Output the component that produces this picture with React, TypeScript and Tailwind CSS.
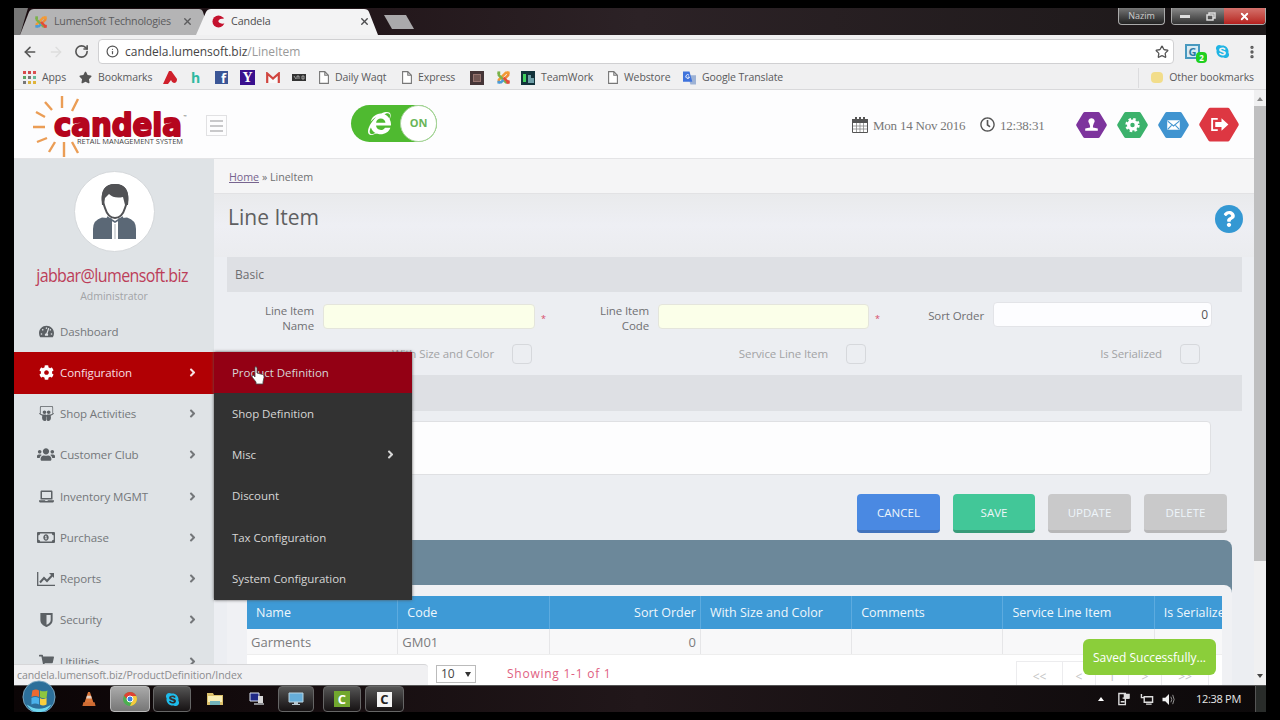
import type { ReactNode } from 'react';
import {
  FaAngleRight,
  FaCog,
  FaLaptop,
  FaQuestion,
  FaRegClock,
  FaRegMoneyBillAlt,
  FaShoppingCart,
  FaSkype,
  FaSlideshare,
  FaStar,
  FaTachometerAlt,
  FaUsers,
  FaInternetExplorer,
} from 'react-icons/fa';
import { ArrowLeft, ArrowRight, Info, MoreVertical, RotateCw, Star, X } from 'lucide-react';

const menuItems = [
  { label: 'Dashboard', icon: <FaTachometerAlt />, arrow: false },
  { label: 'Configuration', icon: <FaCog />, arrow: true, active: true },
  { label: 'Shop Activities', icon: <FaSlideshare />, arrow: true },
  { label: 'Customer Club', icon: <FaUsers className="h-[17px] w-[18px]" />, arrow: true },
  { label: 'Inventory MGMT', icon: <FaLaptop />, arrow: true },
  { label: 'Purchase', icon: <FaRegMoneyBillAlt className="h-[17px] w-[18px]" />, arrow: true },
  { label: 'Reports', icon: <ChartIcon />, arrow: true },
  { label: 'Security', icon: <ShieldIcon />, arrow: true },
  { label: 'Utilities', icon: <FaShoppingCart />, arrow: true },
];

const subMenu = ['Product Definition', 'Shop Definition', 'Misc', 'Discount', 'Tax Configuration', 'System Configuration'];

const columns = ['Name', 'Code', 'Sort Order', 'With Size and Color', 'Comments', 'Service Line Item', 'Is Serialized'];
const row = ['Garments', 'GM01', '0', '', '', '', ''];

function ShieldIcon() {
  return (
    <svg viewBox="0 0 14 16" className="h-[14px] w-[13px]" fill="currentColor">
      <path d="M0 0h14v8c0 4-3 6.500-7 8-4-1.500-7-4-7-8zM7 2.200v11.300c2.800-1.200 4.800-2.900 4.800-5.500V2.200z" fillRule="evenodd" />
    </svg>
  );
}

function ChartIcon() {
  return (
    <svg viewBox="0 0 18 14" className="h-[14px] w-[18px]" fill="none" stroke="currentColor">
      <path d="M.7 0v13.300H18" strokeWidth="1.300" />
      <path d="m3 10.500 4-4.500 3 3 5.500-6" strokeWidth="2" />
      <path d="M12 1h5v5z" fill="currentColor" stroke="none" />
    </svg>
  );
}

function CalendarIcon() {
  return (
    <svg viewBox="0 0 16 16" className="mr-[5px] h-[16px] w-[16px]">
      <path d="M.5 2.500h15v13H.5z" fill="#fff" stroke="#555" />
      <path d="M0 2h16v4H0z" fill="#555" />
      <path d="M4 0v4M8 0v4M12 0v4" stroke="#555" strokeWidth="2" />
      <path d="M1 9h14M1 12h14M4.500 6v9M8 6v9M11.500 6v9" stroke="#888" strokeWidth=".8" />
    </svg>
  );
}

function PageIcon() {
  return (
    <svg viewBox="0 0 10 13" className="h-[13px] w-[10px]" fill="#fff" stroke="#777" strokeWidth="1.100">
      <path d="M.6.6h5.200l3.600 3.700v8.100H.6zM5.800.6v3.700h3.600" />
    </svg>
  );
}

function JoomlaColors({ className }: { className: string }) {
  return (
    <svg viewBox="0 0 16 16" className={className} fill="none" strokeWidth="2.600">
      <path d="M3 13V10.500L10.500 3H13" stroke="#f29a36" />
      <path d="M13 13h-2.500L3 5.500V3" stroke="#7ab24a" />
      <path d="M13 3v2.500L8 10.500" stroke="#f08a36" />
      <path d="m8 8 5 5M13 11v2h-2" stroke="#e24b3b" />
      <path d="M3 13h2.500L8 10.500" stroke="#4b9bd8" />
      <path d="M1.500 1.500h3v3h-3z" fill="#7ab24a" />
      <path d="M11.500 1.500h3v3h-3z" fill="#f29a36" />
      <path d="M11.500 11.500h3v3h-3z" fill="#e24b3b" />
      <path d="M1.500 11.500h3v3h-3z" fill="#4b9bd8" />
    </svg>
  );
}

function BrowserTabs() {
  return (
    <div className="relative flex h-[27px] shrink-0 bg-gradient-to-r from-[#17090d] via-[#2c2226] to-[#1c1819]">
      <svg className="absolute inset-0 h-[27px] w-[420px]" viewBox="0 0 420 27">
        <path d="M0 0h14L6 27H0z" fill="#777" />
        <path d="M6 27 15 4q1.500-3 5-3h165q3 0 4 3l7 23z" fill="#b4b4b5" />
        <path d="M182 27 192 4q1.500-3 5-3h153q4 0 5 3l9 23z" fill="#f3f3f4" />
        <path d="M370 7h22l8 14h-22z" fill="#aaa9ab" />
      </svg>
      <div className="relative flex w-[185px] items-center pl-5 pr-1.5 text-[10.700px] tracking-[-0.250px] text-[#5b5b5d]">
        <JoomlaColors className="h-[14px] w-[14px] shrink-0" />
        <span className="ml-1.5 whitespace-nowrap">LumenSoft Technologies</span>
        <X className="ml-auto h-[11px] w-[11px]" strokeWidth={3} />
      </div>
      <div className="relative flex w-[175px] items-center pl-[13px] text-[10.700px] tracking-[-0.100px] text-[#4c4c4e]">
        <svg viewBox="0 0 14 14" className="h-[13px] w-[13px]">
          <circle cx="7" cy="7" r="6.500" fill="#c4122e" />
          <path d="M14 4.500C9 3 6.500 5 7 7s4 3 7 2z" fill="#f3f3f4" />
        </svg>
        <span className="ml-[6px]">Candela</span>
        <X className="ml-auto mr-1 h-[11px] w-[11px]" strokeWidth={3} />
      </div>
      <div className="absolute right-0 top-0 flex h-[17px] gap-1.5 text-white">
        <div className="w-[47px] rounded-b border border-t-0 border-[#aaa] bg-gradient-to-b from-[#777] to-[#222] text-center text-[9px] leading-[16px] text-[#ccc]">Nazim</div>
        <div className="flex w-[95px] overflow-hidden rounded-b border border-t-0 border-[#aaa]">
          <div className="flex w-[26px] items-center justify-center bg-gradient-to-b from-[#8a8a8a] to-[#333]">
            <span className="h-[3px] w-2.5 bg-[#ddd]" />
          </div>
          <div className="flex w-[26px] items-center justify-center bg-gradient-to-b from-[#8a8a8a] to-[#333]">
            <svg viewBox="0 0 10 9" className="h-[9px] w-[10px]" fill="none" stroke="#ddd" strokeWidth="1.500">
              <path d="M3 3V1h6v5H7M1 3h6v5H1z" />
            </svg>
          </div>
          <div className="flex flex-1 items-center justify-center bg-gradient-to-b from-[#d4716c] to-[#b51d1d]">
            <X className="h-[11px] w-[11px]" strokeWidth={4} />
          </div>
        </div>
      </div>
    </div>
  );
}

function AddressBar() {
  return (
    <div className="flex h-[30px] shrink-0 items-center bg-[#f0f0f1] pl-2 pt-[3px] text-[#555]">
      <ArrowLeft className="h-4 w-4" strokeWidth={2.4} />
      <ArrowRight className="ml-[10px] h-4 w-4 text-[#ddd]" strokeWidth={2} />
      <RotateCw className="ml-[10px] h-[15px] w-[15px]" strokeWidth={2.6} />
      <div className="ml-[9px] flex h-[25px] w-[1076px] items-center rounded-sm border border-[#d0d0d2] bg-white pl-[7px] pr-[4px]">
        <Info className="h-[13px] w-[13px]" strokeWidth={2.2} />
        <span className="ml-[6px] text-[12px] tracking-[-0.020px] text-[#444]">
          candela.lumensoft.biz<span className="text-[#999]">/LineItem</span>
        </span>
        <Star className="ml-auto h-[14px] w-[14px]" strokeWidth={2.2} />
      </div>
      <div className="relative ml-[11px] h-[15px] w-[15px] border-2 border-[#4899bf] bg-[#d8ebf4] text-center text-[11px] font-bold leading-[11px] text-[#2b7aa5]">
        G
        <span className="absolute -bottom-[6px] left-[9px] h-[11px] w-[11px] rounded-sm bg-[#20d020] text-[8px] leading-[11px] text-white">2</span>
      </div>
      <FaSkype className="ml-[15px] h-[15px] w-[15px] text-[#1fb4e4]" />
      <MoreVertical className="ml-[14px] h-[16px] w-[16px]" strokeWidth={3} />
    </div>
  );
}

function Bookmark({ icon, label, className }: { icon: ReactNode; label?: string; className: string }) {
  return (
    <div className={`flex shrink-0 items-center whitespace-nowrap ${className}`}>
      {icon}
      {label && <span className="ml-[6px]">{label}</span>}
    </div>
  );
}

function Bookmarks() {
  return (
    <div className="flex h-[25px] shrink-0 items-center border-b border-[#d9d9db] bg-[#f0f0f1] pl-[9px] pt-px text-[10.500px] tracking-[-0.100px] text-[#5a5a5c]">
      <Bookmark
        className="w-[56px]"
        label="Apps"
        icon={
          <svg viewBox="0 0 13 13" className="h-[13px] w-[13px]">
            {[0, 1, 2].map((i) => (
              <g key={i}>
                <rect x="0" y={i * 5} width="3" height="3" fill={['#d84a4a', '#5aa564', '#777'][i]} />
                <rect x="5" y={i * 5} width="3" height="3" fill={['#c94b50', '#777', '#d9b440'][i]} />
                <rect x="10" y={i * 5} width="3" height="3" fill={['#db5151', '#6b9', '#e0b43a'][i]} />
              </g>
            ))}
          </svg>
        }
      />
      <Bookmark className="w-[84px]" label="Bookmarks" icon={<FaStar className="h-[13px] w-[13px] text-[#555]" />} />
      <Bookmark
        className="w-[28px]"
        icon={
          <svg viewBox="0 0 14 13" className="h-[13px] w-[14px]" fill="#cf202c">
            <path d="M6 0q2-1 3 1l5 7q0 4-3 4-2 0-3-3l-3 4H0z" />
          </svg>
        }
      />
      <Bookmark className="w-[24px]" icon={<span className="text-[14px] font-bold text-[#2fb9a0]">h</span>} />
      <Bookmark
        className="w-[25px]"
        icon={<span className="h-[13px] w-[13px] bg-[#3b5696] pr-0.5 text-right text-[13px] font-bold leading-[15px] text-white">f</span>}
      />
      <Bookmark
        className="w-[26px]"
        icon={<span className="h-[15px] w-[15px] bg-[#3a108e] text-center font-['Liberation_Serif'] text-[14px] font-bold leading-[15px] text-white">Y</span>}
      />
      <Bookmark
        className="w-[26px]"
        icon={
          <svg viewBox="0 0 14 11" className="h-[11px] w-[14px]" fill="#f9f9f9" stroke="#d0453f" strokeWidth="2.200">
            <path d="M1.200 11V1.500L7 6.500l5.800-5V11" />
          </svg>
        }
      />
      <Bookmark
        className="w-[27px]"
        icon={
          <svg viewBox="0 0 14 7" className="h-[7px] w-[14px]">
            <path d="M0 0h14v7H0z" fill="#333" />
            <path d="M2 2l2 3M5 5V2h2v3M10 2v3h2V2z" stroke="#ccc" fill="none" strokeWidth=".7" />
          </svg>
        }
      />
      <Bookmark className="w-[83px]" label="Daily Waqt" icon={<PageIcon />} />
      <Bookmark className="w-[68px]" label="Express" icon={<PageIcon />} />
      <Bookmark
        className="w-[26px]"
        icon={
          <span className="flex h-[14px] w-[14px] items-center justify-center bg-[#453537]">
            <span className="h-[8px] w-[8px] border border-[#97746f] bg-[#715653]" />
          </span>
        }
      />
      <Bookmark className="w-[25px]" icon={<JoomlaColors className="h-[15px] w-[15px]" />} />
      <Bookmark
        className="w-[87px]"
        label="TeamWork"
        icon={
          <svg viewBox="0 0 14 14" className="h-[14px] w-[14px]">
            <path d="M0 0h14v14H0z" fill="#12323a" />
            <path d="M2 3h3v8H2z" fill="#40cf5e" />
            <path d="M7 4h3v3h3v5H7z" fill="#6f9fa8" />
          </svg>
        }
      />
      <Bookmark className="w-[75px]" label="Webstore" icon={<PageIcon />} />
      <Bookmark
        className="w-[120px]"
        label="Google Translate"
        icon={
          <svg viewBox="0 0 14 14" className="h-[14px] w-[13px]">
            <path d="M5 4h9v10H8z" fill="#9db2d5" />
            <path d="M0 0h7l3 11H0z" fill="#3f73dc" />
            <path d="M6.500 4A2 2 0 1 0 7 6H5" stroke="#fff" fill="none" />
          </svg>
        }
      />
      <div className="ml-auto mr-[12px] flex h-[20px] items-center border-l border-[#dcdcde] pl-[12px]">
        <span className="h-[11px] w-[12px] rounded-sm bg-[#f2dd8b]" />
        <span className="ml-[6px]">Other bookmarks</span>
      </div>
    </div>
  );
}

function Logo() {
  return (
    <svg viewBox="0 0 166 66" className="h-[66px] w-[166px]">
      <path
        d="M3 35h12M6 20l9 5M15 10l7 8M32 4v12M48 7l-6 12M7 50l10-4M19 60l6-10M34 65V50M48 61l-6-11"
        stroke="#eb9d55"
        strokeWidth="2.400"
      />
      <text
        x="24"
        y="43.500"
        fontFamily="'DejaVu Sans'"
        fontWeight="700"
        fontSize="32"
        fill="#b5051d"
        stroke="#b5051d"
        strokeWidth="2"
        strokeLinejoin="round"
        textLength="128"
        lengthAdjust="spacingAndGlyphs"
      >
        candela
      </text>
      <text x="47" y="52" fontFamily="Open Sans" fontSize="6.500" fill="#444" textLength="106" lengthAdjust="spacingAndGlyphs">
        RETAIL MANAGEMENT SYSTEM
      </text>
      <text x="153.500" y="26" fontFamily="Open Sans" fontSize="4" fill="#555">
        ™
      </text>
    </svg>
  );
}

function Hexagon({ color, className, children }: { color: string; className: string; children: ReactNode }) {
  return (
    <svg viewBox="0 0 32 28" className={className}>
      <path d="M9 .5h14q1 0 1.600 1l6.900 11.500q.6 1 0 2l-6.900 11.500q-.6 1-1.600 1H9q-1 0-1.600-1L.5 15q-.6-1 0-2L7.400 1.500q.6-1 1.600-1z" fill={color} />
      {children}
    </svg>
  );
}

function Header() {
  return (
    <div className="flex h-[69px] shrink-0 items-start border-b border-[#e4e4e6] bg-[#fdfdfe]">
      <div className="ml-[16px] mt-[2px] w-[162px]">
        <Logo />
      </div>
      <div className="ml-[14px] mt-[25px] flex h-[21px] w-[21px] flex-col justify-center gap-[3px] border border-[#e1e1e3] px-[3px]">
        <span className="h-[2px] bg-[#c9c9cb]" />
        <span className="h-[2px] bg-[#c9c9cb]" />
        <span className="h-[2px] bg-[#c9c9cb]" />
      </div>
      <div className="ml-[124px] mt-[15px] flex h-[37px] w-[86px] items-center rounded-full bg-[#4fba30]">
        <FaInternetExplorer className="ml-[17px] h-[23px] w-[23px] text-white" />
        <span className="ml-auto flex h-[37px] w-[37px] items-center justify-center rounded-full border border-[#a8d39b] bg-white text-[11px] font-bold text-[#69b557]">ON</span>
      </div>
      <div className="ml-auto flex h-[69px] items-center font-['Liberation_Serif'] text-[13px] tracking-[-0.220px] text-[#777]">
        <CalendarIcon />
        <span className="w-[107px] whitespace-nowrap pt-[2px]">Mon 14 Nov 2016</span>
        <FaRegClock className="mr-[5px] h-[15px] w-[15px] text-[#555]" />
        <span className="w-[76px] pt-[2px]">12:38:31</span>
      </div>
      <div className="mr-[15px] flex h-[69px] items-center">
        <Hexagon color="#7d349d" className="h-[28px] w-[31px]">
          <path d="M16 7a3.200 3.200 0 0 1 2.300 5.500L17.500 15v1.500l5 1V20h-13v-2.500l5-1V15l-.8-2.500A3.200 3.200 0 0 1 16 7z" fill="#fff" />
        </Hexagon>
        <Hexagon color="#3cb26c" className="ml-[10px] h-[28px] w-[31px]">
          <circle cx="16" cy="14" r="4" fill="none" stroke="#fff" strokeWidth="3.400" />
          <circle cx="16" cy="14" r="6.200" fill="none" stroke="#fff" strokeWidth="2.400" strokeDasharray="2.600 2.270" />
        </Hexagon>
        <Hexagon color="#4094d0" className="ml-[10px] h-[28px] w-[31px]">
          <rect x="9.500" y="9" width="13" height="10" rx="1" fill="#fff" />
          <path d="m10 10 6 5 6-5M10 18.500l4-4M22 18.500l-4-4" fill="none" stroke="#4094d0" strokeWidth="1.100" />
        </Hexagon>
        <Hexagon color="#dd3742" className="ml-[10px] h-[35px] w-[40px]">
          <path d="M15 9.500h-4.500v9H15" fill="none" stroke="#fff" strokeWidth="1.500" />
          <path d="M13 12h5V9l5.500 5-5.500 5v-3h-5z" fill="#fff" />
        </Hexagon>
      </div>
    </div>
  );
}

function Sidebar() {
  return (
    <div className="w-[200px] shrink-0 overflow-hidden bg-[#dfe3e6]">
      <div className="flex h-[152px] flex-col items-center pt-[12px]">
        <div className="h-[81px] w-[81px] shrink-0 rounded-full border border-[#d5d8db] bg-white">
          <svg viewBox="0 0 79 79" className="h-full w-full">
            <path d="M18 67V57q0-9 9-11.500l10 1V67zM61 67V57q0-9-9-11.500l-9 1V67z" fill="#5b6876" />
            <path d="M28 30q-2-17 12-17 14 0 12 17l-2 6q-3 10-10 10t-10-10z" fill="#fff" stroke="#515255" strokeWidth="2" />
            <path d="M27 33q-3-21 13-21 16 0 13 21h-3l-2-8q-9 2-14-3l-4 4-1 7z" fill="#515255" />
            <path d="m32 45 8 5 8-5" fill="none" stroke="#5b6876" strokeWidth="1.500" />
            <path d="M40 52v15" stroke="#c9ccd0" strokeWidth="1.500" />
          </svg>
        </div>
        <div className="mr-[4px] mt-[10px] scale-y-[1.150] whitespace-nowrap text-[16px] leading-[26px] tracking-[-0.600px] text-[#bc3e59]">jabbar@lumensoft.biz</div>
        <div className="text-[10.500px] leading-[16px] text-[#a2a4a6]">Administrator</div>
      </div>
      {menuItems.map((item) => (
        <div
          key={item.label}
          className={`flex h-[41.250px] items-center pb-px pl-[23px] pr-[15px] text-[11.500px] tracking-[-0.100px] ${
            item.active ? 'bg-[#b10004] text-[#f7dfe1]' : 'text-[#74777a]'
          }`}
        >
          <span className={`flex w-[18px] justify-center text-[15px] ${item.active ? 'text-white' : 'text-[#5c6165]'}`}>{item.icon}</span>
          <span className="ml-[5px] whitespace-nowrap">{item.label}</span>
          {item.arrow && <FaAngleRight className="ml-auto h-[13px] w-[13px]" />}
        </div>
      ))}
    </div>
  );
}

function SubMenu() {
  return (
    <div className="absolute left-[200px] top-[262px] h-[248px] w-[198px] bg-[#323232] text-[11.500px] tracking-[-0.050px] text-[#d6d6d6] shadow-[0_0_3px_#555]">
      {subMenu.map((label, i) => (
        <div key={label} className={`flex h-[41.250px] items-center pb-px pl-[18px] pr-[15px] ${i === 0 ? 'bg-[#930014]' : ''}`}>
          {label}
          {label === 'Misc' && <FaAngleRight className="ml-auto h-[13px] w-[13px]" />}
        </div>
      ))}
      <svg viewBox="0 0 14 19" className="absolute left-[37px] top-[14px] h-[19px] w-[14px]" fill="#fff" stroke="#444" strokeWidth=".8">
        <path d="M4 1q1.500-1 2 1v5l5.500 1.500q2 .5 1.500 3L12 16v2H5v-2l-4-5q-.5-2 1.500-1.500L4 11z" />
      </svg>
    </div>
  );
}

function CheckField({ label, className }: { label: string; className: string }) {
  return (
    <div className={`flex items-center justify-end ${className}`}>
      {label}
      <span className="ml-[18px] h-[20px] w-[20px] rounded-sm border border-[#d6d8dc]" />
    </div>
  );
}

function LineItemForm() {
  return (
    <div>
      <div className="ml-[13px] flex h-[35px] w-[1015px] items-center bg-[#dee0e4] pl-[8px] text-[12px] text-[#6e6e70]">Basic</div>
      <div className="flex h-[46px] items-start pt-[11px] text-[11.500px] tracking-[-0.100px] text-[#707072]">
        <span className="w-[100px] text-right leading-[15px]">
          Line Item
          <br />
          Name
        </span>
        <span className="ml-[9px] mt-px h-[25px] w-[212px] rounded-sm border border-[#e4e5dc] bg-[#fbffe9]" />
        <span className="ml-[6px] mt-[8px] w-[6px] text-[9px] leading-[15px] text-[#d74b68]">*</span>
        <span className="w-[102px] text-right leading-[15px]">
          Line Item
          <br />
          Code
        </span>
        <span className="ml-[9px] mt-px h-[25px] w-[211px] rounded-sm border border-[#e4e5dc] bg-[#fbffe9]" />
        <span className="ml-[6px] mt-[8px] w-[6px] text-[9px] leading-[15px] text-[#d74b68]">*</span>
        <span className="mt-[5px] w-[103px] text-right leading-[16px]">Sort Order</span>
        <span className="ml-[9px] -mt-px h-[25px] w-[219px] rounded-sm border border-[#e3e4e8] bg-[#fdfdff] pr-[3px] text-right text-[12px] leading-[24px] text-[#555]">0</span>
      </div>
      <div className="flex h-[37px] items-center pb-[5px] text-[11.500px] tracking-[-0.100px] text-[#a2a3a5]">
        <CheckField label="With Size and Color" className="w-[318px]" />
        <CheckField label="Service Line Item" className="w-[334px]" />
        <CheckField label="Is Serialized" className="w-[334px]" />
      </div>
      <div className="ml-[13px] h-[36px] w-[1015px] bg-[#dee0e4]" />
      <div className="ml-[110px] mt-[10px] h-[54px] w-[887px] rounded border border-[#dfe0e3] bg-[#fdfdfe]" />
      <div className="ml-[643px] mt-[19px] flex h-[39px] gap-[13px] text-center text-[11.500px] leading-[37px] text-[#eef5fa]">
        <button className="w-[83px] rounded border-b-[3px] border-[#4273bd] bg-[#4a89e2]">CANCEL</button>
        <button className="w-[82px] rounded border-b-[3px] border-[#379b79] bg-[#42c798]">SAVE</button>
        <button className="w-[83px] rounded border-b-[3px] border-[#b7b7b8] bg-[#c9c9ca]">UPDATE</button>
        <button className="w-[83px] rounded border-b-[3px] border-[#b7b7b8] bg-[#c9c9ca]">DELETE</button>
      </div>
    </div>
  );
}

function ItemsTable() {
  return (
    <div className="ml-[13px] mt-[7px] w-[1005px] rounded-t-[8px] bg-[#6c889a] pt-[45px]">
      <div className="h-[99px] rounded-t-[8px] bg-[#f0f1f4] pl-[20px] pt-[11px]">
        <div className="w-[975px] overflow-hidden bg-white">
          <div className="flex h-[33px] w-[1060px] bg-[#3e9ad6] text-[12.500px] leading-[33px] text-[#eef7fc]">
            {columns.map((name) => (
              <div key={name} className={`w-[151.300px] shrink-0 whitespace-nowrap border-r border-[#5dabdf] ${name === 'Sort Order' ? 'pr-[4px] text-right' : 'pl-[9px]'}`}>
                {name}
              </div>
            ))}
          </div>
          <div className="flex h-[26px] w-[1060px] border-b border-[#eee] bg-[#f8f8f9] text-[13px] leading-[26px] text-[#7c7c7e]">
            {row.map((value, i) => (
              <div key={columns[i]} className={`w-[151.300px] shrink-0 border-r border-[#e6e6e8] ${i === 2 ? 'pr-[4px] text-right' : 'pl-[4px]'}`}>
                {value}
              </div>
            ))}
          </div>
          <div className="flex h-[30px] items-start pl-[189px] text-[12px]">
            <div className="mt-[10px] flex h-[18px] w-[40px] items-center justify-between border border-[#bbb] px-[4px] text-[12px] text-[#444]">
              10 <span className="border-x-[3px] border-t-[5px] border-x-transparent border-t-[#333]" />
            </div>
            <span className="ml-[31px] mt-[10px] leading-[18px] tracking-[0.750px] text-[#e0607f]">Showing 1-1 of 1</span>
            <div className="ml-auto mr-[13px] mt-[6px] flex border border-[#ececee] text-center leading-[30px] text-[#c4c4c4]">
              <span className="w-[46px] border-r border-[#ececee]">&lt;&lt;</span>
              <span className="w-[33px] border-r border-[#ececee]">&lt;</span>
              <span className="w-[33px] border-r border-[#ececee]">1</span>
              <span className="w-[33px] border-r border-[#ececee]">&gt;</span>
              <span className="w-[46px]">&gt;&gt;</span>
            </div>
          </div>
        </div>
      </div>
    </div>
  );
}

function Scrollbar() {
  return (
    <div className="flex w-[12px] shrink-0 flex-col items-center bg-[#f0f0f1]">
      <span className="mt-[7px] border-x-[3px] border-b-[4px] border-x-transparent border-b-[#888]" />
      <span className="mt-[5px] h-[455px] w-[12px] bg-[#bfbfc0]" />
      <span className="mb-[7px] mt-auto border-x-[3px] border-t-[4px] border-x-transparent border-t-[#444]" />
    </div>
  );
}

function TaskButton({ open, bright, className, children }: { open?: boolean; bright?: boolean; className: string; children: ReactNode }) {
  let look = '';
  if (open) look = 'border border-[#666] bg-gradient-to-b from-[#555] to-[#171314]';
  if (bright) look = 'border border-[#bbb] bg-gradient-to-b from-[#aaa] to-[#777]';
  return <div className={`flex h-[26px] shrink-0 items-center justify-center rounded-sm ${look} ${className}`}>{children}</div>;
}

function Taskbar() {
  return (
    <div className="flex h-[27px] shrink-0 items-center border-t border-[#555] bg-gradient-to-r from-[#0b0506] via-[#21171a] to-[#0c090a]">
      <div className="relative h-[27px] w-[54px] shrink-0">
        <svg viewBox="0 0 36 36" className="absolute -top-[6px] left-[7px] h-[34px] w-[36px]">
          <circle cx="18" cy="18" r="17" fill="#2c6f9a" stroke="#7ea9c1" />
          <path d="M5 26q13 9 26 0-4 8-13 8T5 26z" fill="#6fd6ee" />
          <path d="M11 11q4-2 7 0v7q-4-2-8 0z" fill="#ed6a32" />
          <path d="M19 11q4 2 8 0l-1 8q-4 1-7-1z" fill="#8dc63f" />
          <path d="M10 19q4-2 8 0v7q-4-2-8 0z" fill="#4bb1ea" />
          <path d="M19 19q3 2 7 0v7q-4 2-7 0z" fill="#fbcf3e" />
        </svg>
      </div>
      <TaskButton className="w-[42px]">
        <svg viewBox="0 0 14 16" className="h-[15px] w-[14px]">
          <path d="M6 0h2l4 12H2z" fill="#d97538" />
          <path d="M4.800 4h4.400l.8 3H4z" fill="#e5d3c6" />
          <path d="M1 11h12l1 4H0z" fill="#cf6c33" />
        </svg>
      </TaskButton>
      <TaskButton bright className="w-[40px]">
        <svg viewBox="0 0 14 14" className="h-[14px] w-[14px]">
          <circle cx="7" cy="7" r="7" fill="#4caf50" />
          <path d="M7 0a7 7 0 0 1 6.300 4H7L4 7 1 3.500A7 7 0 0 1 7 0z" fill="#df4034" />
          <path d="M13.300 4A7 7 0 0 1 7 14l3-7-3-3z" fill="#f7ca3e" />
          <circle cx="7" cy="7" r="3" fill="#3f82e0" stroke="#fff" />
        </svg>
      </TaskButton>
      <TaskButton open className="ml-[3px] w-[38px]">
        <FaSkype className="h-[15px] w-[15px] text-[#1ebcec]" />
      </TaskButton>
      <TaskButton className="ml-[2px] w-[43px]">
        <svg viewBox="0 0 16 14" className="h-[14px] w-[16px]">
          <path d="M0 1h6l1 2h9v10H0z" fill="#dcc16c" />
          <path d="M1 4h14v6H1z" fill="#f8eeb6" />
          <path d="M3 9h10v4H3z" fill="#72b3bb" />
        </svg>
      </TaskButton>
      <TaskButton className="w-[42px]">
        <svg viewBox="0 0 16 14" className="h-[14px] w-[16px]">
          <path d="M1 1h9v8H1z" fill="#202a86" stroke="#dce4f2" />
          <path d="M9 4h5v7H9z" fill="#d7d7d7" />
          <path d="M5 11h10v2H5z" fill="#8d8d91" />
        </svg>
      </TaskButton>
      <TaskButton open className="w-[36px]">
        <svg viewBox="0 0 16 14" className="h-[14px] w-[16px]">
          <path d="M1 1h14v9H1z" fill="#66add8" stroke="#b8d4e2" />
          <path d="M6 10h4v2h2v1H4v-1h2z" fill="#b8c8d1" />
        </svg>
      </TaskButton>
      <TaskButton open className="ml-[9px] w-[38px]">
        <span className="h-[16px] w-[16px] bg-[#71a72e] text-center text-[13px] font-bold leading-[16px] text-white">C</span>
      </TaskButton>
      <TaskButton open className="ml-[4px] w-[39px]">
        <span className="h-[15px] w-[15px] bg-[#f4f4f4] text-center text-[13px] font-bold leading-[15px] text-[#222]">C</span>
      </TaskButton>
      <div className="ml-auto flex items-center text-[11px] tracking-[-0.300px] text-[#e7e7e7]">
        <span className="mr-[13px] border-x-[3px] border-b-[4px] border-x-transparent border-b-white" />
        <svg viewBox="0 0 14 14" className="mr-[10px] h-[14px] w-[13px]" fill="none" stroke="#ddd" strokeWidth="1.500">
          <path d="M2 1h7v12H2zM6 6h6V2M4 10h4" />
          <path d="M8 2h5v4H8z" fill="#ddd" />
        </svg>
        <svg viewBox="0 0 14 14" className="mr-[8px] h-[13px] w-[14px]" fill="none" stroke="#ddd" strokeWidth="1.500">
          <path d="M4 4h9v6H4zM1 1v4h3M6 12h6" />
        </svg>
        <svg viewBox="0 0 14 14" className="mr-[20px] h-[13px] w-[14px]" fill="#eee">
          <path d="M0 5h3l4-4v12L3 9H0z" />
          <path d="M9 4q2 3 0 6M11 2q3 5 0 10" fill="none" stroke="#999" />
        </svg>
        <span className="whitespace-nowrap">12:38 PM</span>
        <span className="ml-[14px] h-[26px] w-[11px] border-l border-[#555] bg-[#292c2a]" />
      </div>
    </div>
  );
}

function App() {
  return (
    <div className="h-[720px] w-[1280px] overflow-hidden bg-black px-[14px] py-[8px] font-['Open_Sans',sans-serif]">
      <div className="flex h-[704px] flex-col overflow-hidden">
        <BrowserTabs />
        <AddressBar />
        <Bookmarks />
        <div className="relative flex h-[595px] shrink-0 overflow-hidden bg-white">
          <div className="flex w-[1240px] flex-col">
            <Header />
            <div className="flex min-h-0 flex-1">
              <Sidebar />
              <div className="w-[1040px] bg-[#eceef2]">
                <div className="flex h-[35px] items-center border-b border-[#e2e2e4] bg-[#f5f5f6] pl-[15px] pt-[3px] text-[10.700px] tracking-[-0.050px] text-[#707072]">
                  <a className="text-[#77648f] underline">Home</a>
                  <span className="ml-[3px]">» LineItem</span>
                </div>
                <div className="flex h-[63px] items-start justify-between bg-gradient-to-b from-[#e9eaec] via-[#eeeff4] to-[#ebecef] pl-[14px] pr-[11px] pt-[9px]">
                  <h1 className="text-[21px] leading-[28px] text-[#5f5f61]">Line Item</h1>
                  <span className="mt-[2px] flex h-[28px] w-[28px] items-center justify-center rounded-full bg-[#3498d3] text-[16px] text-white">
                    <FaQuestion />
                  </span>
                </div>
                <LineItemForm />
                <ItemsTable />
              </div>
            </div>
          </div>
          <Scrollbar />
          <SubMenu />
          <div className="absolute bottom-0 left-0 h-[21px] w-[414px] rounded-tr border-t border-[#d6d6d8] bg-[#f0f0f2] pl-[3px] text-[10.500px] leading-[20px] tracking-[-0.080px] text-[#8c8c8e]">
            candela.lumensoft.biz/ProductDefinition/Index
          </div>
          <div className="absolute left-[1069px] top-[549px] h-[36px] w-[133px] rounded-[6px] bg-[#8bce3a] text-center text-[12px] leading-[37px] text-white">
            Saved Successfully...
          </div>
        </div>
        <Taskbar />
      </div>
    </div>
  );
}

export default App;
